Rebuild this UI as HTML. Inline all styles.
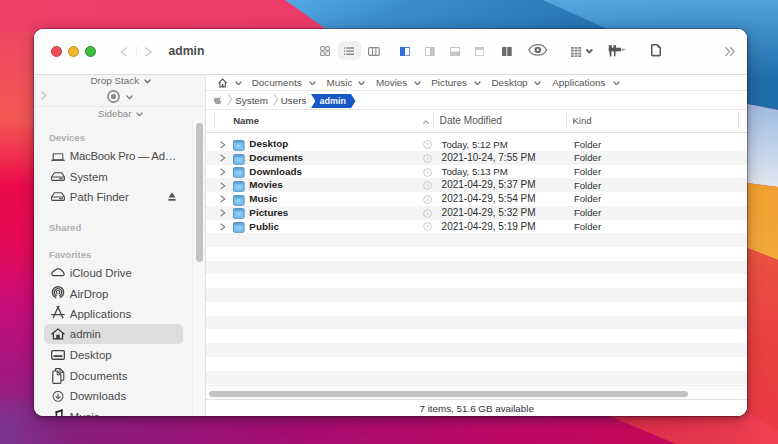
<!DOCTYPE html>
<html><head><meta charset="utf-8">
<style>
html,body{margin:0;padding:0;width:778px;height:444px;overflow:hidden;}
body{position:relative;font-family:"Liberation Sans",sans-serif;}
.a{position:absolute;}
.t{position:absolute;white-space:nowrap;line-height:1;}
#win{position:absolute;left:34px;top:29px;width:713px;height:387px;border-radius:9px;overflow:hidden;background:#fff;}
#winsh{position:absolute;left:34px;top:29px;width:713px;height:387px;border-radius:9px;box-shadow:0 0 0 0.6px rgba(30,10,20,0.45),0 2px 5px rgba(30,0,20,0.3),0 3px 16px rgba(30,0,20,0.3);}
#in{position:absolute;left:-34px;top:-29px;width:778px;height:444px;}
</style></head><body>
<svg class="a" style="left:0;top:0" width="778" height="444" viewBox="0 0 778 444">
<defs>
<linearGradient id="gLeft" gradientUnits="userSpaceOnUse" x1="0" y1="0" x2="0" y2="444">
<stop offset="0" stop-color="#ec4066"/>
<stop offset="0.12" stop-color="#f04c5e"/>
<stop offset="0.27" stop-color="#f25654"/>
<stop offset="0.35" stop-color="#f0304e"/>
<stop offset="0.42" stop-color="#ec0a4c"/>
<stop offset="0.56" stop-color="#e20a58"/>
<stop offset="0.68" stop-color="#c80c78"/>
<stop offset="0.85" stop-color="#a01880"/>
<stop offset="1" stop-color="#7a3490"/>
</linearGradient>
<linearGradient id="gTop" gradientUnits="userSpaceOnUse" x1="0" y1="0" x2="300" y2="0">
<stop offset="0" stop-color="#ec4066"/>
<stop offset="1" stop-color="#ee3a68"/>
</linearGradient>
<linearGradient id="gBot" gradientUnits="userSpaceOnUse" x1="0" y1="0" x2="640" y2="0">
<stop offset="0" stop-color="#7a3490"/>
<stop offset="0.12" stop-color="#8a1e7e"/>
<stop offset="0.45" stop-color="#a40c70"/>
<stop offset="0.78" stop-color="#bc0868"/>
<stop offset="1" stop-color="#c6085a"/>
</linearGradient>
<linearGradient id="gBotMask" gradientUnits="userSpaceOnUse" x1="0" y1="395" x2="0" y2="425">
<stop offset="0" stop-color="#fff" stop-opacity="0"/>
<stop offset="1" stop-color="#fff" stop-opacity="1"/>
</linearGradient>
<mask id="mBot"><rect x="0" y="380" width="778" height="64" fill="url(#gBotMask)"/></mask>
<linearGradient id="gBlue" gradientUnits="userSpaceOnUse" x1="330" y1="-20" x2="420" y2="150">
<stop offset="0" stop-color="#52a8e2"/>
<stop offset="0.3" stop-color="#3c8ccc"/>
<stop offset="1" stop-color="#1f6cab"/>
</linearGradient>
<linearGradient id="gStreak" gradientUnits="userSpaceOnUse" x1="0" y1="0" x2="0" y2="80">
<stop offset="0" stop-color="#62b4ea" stop-opacity="0.75"/>
<stop offset="1" stop-color="#62b4ea" stop-opacity="0"/>
</linearGradient>
<linearGradient id="gLB" gradientUnits="userSpaceOnUse" x1="0" y1="100" x2="0" y2="186">
<stop offset="0" stop-color="#9db6e0"/>
<stop offset="0.5" stop-color="#bccfea"/>
<stop offset="1" stop-color="#dfe6f0"/>
</linearGradient>
<linearGradient id="gOr" gradientUnits="userSpaceOnUse" x1="0" y1="185" x2="0" y2="255">
<stop offset="0" stop-color="#f0a030"/>
<stop offset="1" stop-color="#f2a83a"/>
</linearGradient>
<linearGradient id="gRed" gradientUnits="userSpaceOnUse" x1="0" y1="250" x2="0" y2="444">
<stop offset="0" stop-color="#ea5240"/>
<stop offset="0.5" stop-color="#e84040"/>
<stop offset="1" stop-color="#ec3848"/>
</linearGradient>
<linearGradient id="gRedB" gradientUnits="userSpaceOnUse" x1="600" y1="0" x2="778" y2="0">
<stop offset="0" stop-color="#d82a48"/>
<stop offset="1" stop-color="#f04050"/>
</linearGradient>
</defs>
<rect x="0" y="0" width="778" height="444" fill="url(#gLeft)"/>
<polygon points="0,0 285,0 330,32 0,32" fill="url(#gTop)"/>
<g mask="url(#mBot)"><rect x="0" y="380" width="778" height="64" fill="url(#gBot)"/></g>
<polygon points="285,0 778,0 778,110 747,104 500,60 330,32" fill="url(#gBlue)"/>
<polygon points="543,0 778,0 778,80 720,80" fill="url(#gStreak)"/>
<polygon points="747,104 778,110 778,187 747,183" fill="url(#gLB)"/>
<polygon points="747,183 778,187 778,260 747,248" fill="url(#gOr)"/>
<polygon points="747,248 778,260 778,444 747,444" fill="url(#gRed)"/>
<polygon points="600,412 747,412 778,430 778,444 676,444" fill="url(#gRedB)"/>
</svg>

<div id="winsh"></div>
<div id="win"><div id="in">
<div class="a" style="left:34.00px;top:29.00px;width:713.00px;height:45.00px;background:#fefefe;"></div>
<div class="a" style="left:34.00px;top:73.80px;width:713.00px;height:1.00px;background:#dcdcdc;"></div>
<div class="a" style="left:50.90px;top:45.70px;width:11px;height:11px;box-sizing:border-box;border-radius:50%;background:#f24f55;border:1px solid #b8404a;"></div>
<div class="a" style="left:68.00px;top:45.70px;width:11px;height:11px;box-sizing:border-box;border-radius:50%;background:#f2b62a;border:1px solid #c49028;"></div>
<div class="a" style="left:85.30px;top:45.70px;width:11px;height:11px;box-sizing:border-box;border-radius:50%;background:#38c23e;border:1px solid #2a8a34;"></div>
<svg class="a" style="left:120.00px;top:46.60px" width="7.30" height="9.80"><polyline points="6.30,1 1,4.90 6.30,8.80" fill="none" stroke="#c6c6c6" stroke-width="1.3" stroke-linecap="round" stroke-linejoin="round"/></svg>
<div class="a" style="left:136.20px;top:45.70px;width:0.80px;height:10.30px;background:#efefef;"></div>
<svg class="a" style="left:145.40px;top:46.60px" width="7.20" height="9.80"><polyline points="1,1 6.20,4.90 1,8.80" fill="none" stroke="#c6c6c6" stroke-width="1.3" stroke-linecap="round" stroke-linejoin="round"/></svg>
<div class="t" style="left:168.50px;top:45.07px;font-size:12.2px;color:#4b4b4b;font-weight:bold;">admin</div>
<svg class="a" style="left:319.80px;top:46.20px" width="10" height="10" viewBox="0 0 10 10"><rect x="0.6" y="0.6" width="3.8" height="3.8" rx="1" fill="none" stroke="#9a9a9a" stroke-width="1.1"/><rect x="5.8" y="0.6" width="3.8" height="3.8" rx="1" fill="none" stroke="#9a9a9a" stroke-width="1.1"/><rect x="0.6" y="5.8" width="3.8" height="3.8" rx="1" fill="none" stroke="#9a9a9a" stroke-width="1.1"/><rect x="5.8" y="5.8" width="3.8" height="3.8" rx="1" fill="none" stroke="#9a9a9a" stroke-width="1.1"/></svg>
<div class="a" style="left:337.80px;top:41.30px;width:23.40px;height:18.70px;background:#f0f0f0;border-radius:5px;"></div>
<svg class="a" style="left:344.20px;top:47.00px" width="10" height="9" viewBox="0 0 10 9"><rect x="0" y="0.44999999999999996" width="1.2" height="1.1" fill="#666"/><rect x="2.3" y="0.44999999999999996" width="7.6" height="1.1" fill="#666"/><rect x="0" y="3.55" width="1.2" height="1.1" fill="#666"/><rect x="2.3" y="3.55" width="7.6" height="1.1" fill="#666"/><rect x="0" y="6.65" width="1.2" height="1.1" fill="#666"/><rect x="2.3" y="6.65" width="7.6" height="1.1" fill="#666"/></svg>
<svg class="a" style="left:368.10px;top:46.80px" width="12" height="9.2" viewBox="0 0 12 9.2"><rect x="0.65" y="0.65" width="10.6" height="7.8" rx="1" fill="none" stroke="#8a8a8a" stroke-width="1.2"/><rect x="4" y="0.5" width="1.1" height="8" fill="#8a8a8a"/><rect x="7.3" y="0.5" width="1.1" height="8" fill="#8a8a8a"/></svg>
<svg class="a" style="left:400.10px;top:47.20px" width="10.2" height="9.3" viewBox="0 0 10.2 9.3"><rect x="0.5" y="0.5" width="9.2" height="8.3" fill="#fff" stroke="#4a7ed0" stroke-width="1"/><rect x="0" y="0" width="5" height="9.3" fill="#2f6fd6"/></svg>
<svg class="a" style="left:425.20px;top:47.20px" width="9.6" height="9.3" viewBox="0 0 9.6 9.3"><rect x="0.5" y="0.5" width="8.6" height="8.3" fill="#fff" stroke="#c4c4c4" stroke-width="1"/><rect x="4.8" y="0" width="4.8" height="9.3" fill="#c4c4c4"/></svg>
<svg class="a" style="left:449.60px;top:47.20px" width="10" height="9.3" viewBox="0 0 10 9.3"><rect x="0.5" y="0.5" width="9" height="8.3" fill="#fff" stroke="#c4c4c4" stroke-width="1"/><rect x="0" y="4.6" width="10" height="4.7" fill="#c4c4c4"/></svg>
<svg class="a" style="left:475.00px;top:47.20px" width="9.2" height="9.3" viewBox="0 0 9.2 9.3"><rect x="0.5" y="0.5" width="8.2" height="8.3" fill="#fff" stroke="#c4c4c4" stroke-width="1"/><rect x="0" y="0" width="9.2" height="2.8" fill="#c4c4c4"/></svg>
<svg class="a" style="left:502.30px;top:47.20px" width="9.7" height="9.3" viewBox="0 0 9.7 9.3"><rect x="0" y="0" width="4.4" height="9.3" fill="#6a6a6a"/><rect x="5.3" y="0" width="4.4" height="9.3" fill="#6a6a6a"/></svg>
<svg class="a" style="left:528.00px;top:44.40px" width="20" height="12" viewBox="0 0 20 12"><path d="M0.8,5.95 C3.5,1.2 7,0.7 9.8,0.7 C12.6,0.7 16.1,1.2 18.8,5.95 C16.1,10.7 12.6,11.2 9.8,11.2 C7,11.2 3.5,10.7 0.8,5.95 Z" fill="none" stroke="#777" stroke-width="1.3"/><circle cx="9.8" cy="5.95" r="3.3" fill="#6e6e6e"/><circle cx="9.8" cy="5.95" r="1.1" fill="#fff"/></svg>
<svg class="a" style="left:571.40px;top:46.70px" width="10.4" height="10.2" viewBox="0 0 10.4 10.2"><rect x="0" y="0" width="2.8" height="1.8" fill="#888"/><rect x="3.7" y="0" width="2.8" height="1.8" fill="#888"/><rect x="7.4" y="0" width="2.8" height="1.8" fill="#888"/><rect x="0" y="2.5" width="2.8" height="1.8" fill="#888"/><rect x="3.7" y="2.5" width="2.8" height="1.8" fill="#888"/><rect x="7.4" y="2.5" width="2.8" height="1.8" fill="#888"/><rect x="0" y="5.8" width="2.8" height="1.8" fill="#888"/><rect x="3.7" y="5.8" width="2.8" height="1.8" fill="#888"/><rect x="7.4" y="5.8" width="2.8" height="1.8" fill="#888"/><rect x="0" y="8.3" width="2.8" height="1.8" fill="#888"/><rect x="3.7" y="8.3" width="2.8" height="1.8" fill="#888"/><rect x="7.4" y="8.3" width="2.8" height="1.8" fill="#888"/><rect x="0" y="4.55" width="10.2" height="0.7" fill="#999"/></svg>
<svg class="a" style="left:586.10px;top:49.30px" width="6.6" height="4.6"><polyline points="1,1 3.3,3.6 5.6,1" fill="none" stroke="#666" stroke-width="2" stroke-linecap="round" stroke-linejoin="round"/></svg>
<svg class="a" style="left:608.20px;top:45.10px" width="18" height="12" viewBox="0 0 18 12"><polygon points="0.7,0.3 3.9,0.3 3.3,11.5 1.9,11.5" fill="#555"/><polygon points="5.3,0.3 8,0.3 7.4,11.5 6.2,11.5" fill="#555"/><rect x="0.7" y="2.7" width="12.3" height="3.6" fill="#555"/><polygon points="13.8,3.2 17.9,4.5 13.8,5.9" fill="#999"/></svg>
<svg class="a" style="left:650.90px;top:44.40px" width="10" height="12.4" viewBox="0 0 10 12.4"><path d="M1.8,0.7 H6.2 L9.3,3.8 V10.6 Q9.3,11.6 8.3,11.6 H1.8 Q0.7,11.6 0.7,10.6 V1.8 Q0.7,0.7 1.8,0.7 Z" fill="none" stroke="#555" stroke-width="1.6" stroke-linejoin="round"/><polygon points="6.2,0.7 9.3,3.8 6.6,3.6" fill="#555"/></svg>
<svg class="a" style="left:725.30px;top:47.40px" width="10.4" height="9.4" viewBox="0 0 10.4 9.4"><polyline points="0.8,0.8 4.6,4.6 0.8,8.4" fill="none" stroke="#9a9a9a" stroke-width="1.3" stroke-linecap="round" stroke-linejoin="round"/><polyline points="5.6,0.8 9.4,4.6 5.6,8.4" fill="none" stroke="#9a9a9a" stroke-width="1.3" stroke-linecap="round" stroke-linejoin="round"/></svg>
<div class="a" style="left:34.00px;top:74.80px;width:171.00px;height:341.20px;background:#f5f5f5;"></div>
<div class="a" style="left:204.80px;top:74.80px;width:0.80px;height:341.20px;background:#e2e2e2;"></div>
<div class="t" style="left:90.40px;top:75.92px;font-size:9.9px;color:#6e6e6e;font-weight:normal;">Drop Stack</div>
<svg class="a" style="left:143.50px;top:79.00px" width="7" height="4.8"><polyline points="1,1 3.5,3.8 6,1" fill="none" stroke="#6e6e6e" stroke-width="1.3" stroke-linecap="round" stroke-linejoin="round"/></svg>
<svg class="a" style="left:41.20px;top:91.20px" width="5.60" height="9.00"><polyline points="1,1 4.60,4.50 1,8.00" fill="none" stroke="#bdbdbd" stroke-width="1.1" stroke-linecap="round" stroke-linejoin="round"/></svg>
<svg class="a" style="left:106.60px;top:90.40px" width="13" height="13" viewBox="0 0 13 13"><circle cx="6.5" cy="6.5" r="5.6" fill="none" stroke="#8c8c8c" stroke-width="1.6"/><circle cx="6.5" cy="6.5" r="2.6" fill="#8c8c8c"/></svg>
<svg class="a" style="left:125.50px;top:95.20px" width="7" height="4.8"><polyline points="1,1 3.5,3.8 6,1" fill="none" stroke="#7a7a7a" stroke-width="1.3" stroke-linecap="round" stroke-linejoin="round"/></svg>
<div class="a" style="left:34.00px;top:106.40px;width:170.60px;height:0.80px;background:#ebebeb;"></div>
<div class="t" style="left:98.00px;top:109.49px;font-size:9.7px;color:#8a8a8a;font-weight:normal;">Sidebar</div>
<svg class="a" style="left:135.50px;top:112.00px" width="7" height="4.8"><polyline points="1,1 3.5,3.8 6,1" fill="none" stroke="#8a8a8a" stroke-width="1.3" stroke-linecap="round" stroke-linejoin="round"/></svg>
<div class="a" style="left:193.00px;top:119.00px;width:11.60px;height:297.00px;background:#f7f7f7;"></div>
<div class="a" style="left:192.40px;top:119.00px;width:0.60px;height:297.00px;background:#eeeeee;"></div>
<div class="a" style="left:196.10px;top:122.80px;width:6.80px;height:139.70px;background:#c2c2c2;border-radius:3.4px;"></div>
<div class="t" style="left:49.00px;top:133.46px;font-size:9.5px;color:#b0b0b0;font-weight:bold;">Devices</div>
<div class="t" style="left:49.00px;top:222.86px;font-size:9.5px;color:#b0b0b0;font-weight:bold;">Shared</div>
<div class="t" style="left:49.00px;top:249.86px;font-size:9.5px;color:#b0b0b0;font-weight:bold;">Favorites</div>
<div class="a" style="left:43.80px;top:324.20px;width:139.60px;height:19.80px;background:#dddddd;border-radius:5px;"></div>
<div class="t" style="left:69.80px;top:151.25px;font-size:11.4px;color:#4a4a4a;font-weight:normal;letter-spacing:-0.28px;">MacBook Pro — Ad…</div>
<div class="t" style="left:69.80px;top:172.05px;font-size:11.4px;color:#4a4a4a;font-weight:normal;">System</div>
<div class="t" style="left:69.80px;top:191.95px;font-size:11.4px;color:#4a4a4a;font-weight:normal;">Path Finder</div>
<div class="t" style="left:69.80px;top:267.55px;font-size:11.4px;color:#4a4a4a;font-weight:normal;">iCloud Drive</div>
<div class="t" style="left:69.80px;top:288.65px;font-size:11.4px;color:#4a4a4a;font-weight:normal;">AirDrop</div>
<div class="t" style="left:69.80px;top:308.75px;font-size:11.4px;color:#4a4a4a;font-weight:normal;">Applications</div>
<div class="t" style="left:69.80px;top:328.95px;font-size:11.4px;color:#4a4a4a;font-weight:normal;">admin</div>
<div class="t" style="left:69.80px;top:349.85px;font-size:11.4px;color:#4a4a4a;font-weight:normal;">Desktop</div>
<div class="t" style="left:69.80px;top:370.55px;font-size:11.4px;color:#4a4a4a;font-weight:normal;">Documents</div>
<div class="t" style="left:69.80px;top:391.35px;font-size:11.4px;color:#4a4a4a;font-weight:normal;">Downloads</div>
<div class="t" style="left:69.80px;top:412.15px;font-size:11.4px;color:#4a4a4a;font-weight:normal;">Music</div>
<svg class="a" style="left:51.00px;top:152.50px" width="14" height="9" viewBox="0 0 14 9"><rect x="2.2" y="0.8" width="9.6" height="6" rx="0.6" fill="none" stroke="#555" stroke-width="1.1"/><rect x="0.3" y="6.6" width="13.4" height="1.3" rx="0.5" fill="#555"/></svg>
<svg class="a" style="left:51.00px;top:172.40px" width="14" height="9" viewBox="0 0 14 9"><path d="M3.4,0.7 H10.6 L13.4,5 V7.6 Q13.4,8.4 12.6,8.4 H1.4 Q0.6,8.4 0.6,7.6 V5 Z" fill="none" stroke="#4a4a4a" stroke-width="1.15" stroke-linejoin="round"/><line x1="0.8" y1="5" x2="13.2" y2="5" stroke="#4a4a4a" stroke-width="1"/><line x1="8" y1="6.7" x2="12" y2="6.7" stroke="#4a4a4a" stroke-width="1"/></svg>
<svg class="a" style="left:51.00px;top:192.30px" width="14" height="9" viewBox="0 0 14 9"><path d="M3.4,0.7 H10.6 L13.4,5 V7.6 Q13.4,8.4 12.6,8.4 H1.4 Q0.6,8.4 0.6,7.6 V5 Z" fill="none" stroke="#4a4a4a" stroke-width="1.15" stroke-linejoin="round"/><line x1="0.8" y1="5" x2="13.2" y2="5" stroke="#4a4a4a" stroke-width="1"/><line x1="8" y1="6.7" x2="12" y2="6.7" stroke="#4a4a4a" stroke-width="1"/></svg>
<svg class="a" style="left:168.00px;top:192.20px" width="8" height="9" viewBox="0 0 8 9"><polygon points="4,0.3 7.6,5.5 0.4,5.5" fill="#555"/><rect x="0.4" y="6.9" width="7.2" height="1.8" fill="#555"/></svg>
<svg class="a" style="left:50.60px;top:267.60px" width="14" height="9" viewBox="0 0 14 9"><path d="M2.4,7.6 H11.6 Q13.4,7.6 13.1,6 Q12.6,4 10.4,2 Q8.6,0.8 6.8,0.9 Q4.8,1 3.4,2.6 Q1,3.8 0.8,5.6 Q0.8,7.6 2.4,7.6 Z" fill="none" stroke="#444" stroke-width="1.2" stroke-linejoin="round"/></svg>
<svg class="a" style="left:51.40px;top:286.00px" width="14" height="13" viewBox="0 0 14 13"><circle cx="7" cy="6.3" r="5.6" fill="none" stroke="#4a4a4a" stroke-width="1.4"/><circle cx="7" cy="6.3" r="3.7" fill="none" stroke="#4a4a4a" stroke-width="1.3"/><circle cx="7" cy="6.3" r="1.8" fill="none" stroke="#4a4a4a" stroke-width="1.2"/><polygon points="7,6.8 4.6,13 9.4,13" fill="#f5f5f5"/></svg>
<svg class="a" style="left:51.00px;top:306.00px" width="14" height="13" viewBox="0 0 14 13"><line x1="7" y1="1.2" x2="2.2" y2="11.8" stroke="#444" stroke-width="1.3" stroke-linecap="round"/><line x1="7" y1="1.2" x2="11.8" y2="11.8" stroke="#444" stroke-width="1.3" stroke-linecap="round"/><line x1="0.8" y1="8.6" x2="13.2" y2="8.6" stroke="#444" stroke-width="1.3" stroke-linecap="round"/><line x1="5.6" y1="0.6" x2="8.4" y2="0.6" stroke="#444" stroke-width="1"/></svg>
<svg class="a" style="left:51.40px;top:328.30px" width="14" height="12" viewBox="0 0 14 12"><path d="M0.9,6 L7,0.9 L13.1,6" fill="none" stroke="#333" stroke-width="1.2" stroke-linejoin="round" stroke-linecap="round"/><path d="M2.4,4.8 V10.8 H11.6 V4.8" fill="none" stroke="#333" stroke-width="1.2"/><rect x="5.3" y="6.8" width="3.4" height="4" fill="#333"/></svg>
<svg class="a" style="left:51.00px;top:350.20px" width="14" height="10" viewBox="0 0 14 10"><rect x="0.65" y="0.65" width="12.7" height="8.6" rx="1.2" fill="none" stroke="#444" stroke-width="1.3"/><rect x="2.6" y="5.2" width="8.8" height="1.8" fill="#444"/></svg>
<svg class="a" style="left:52.00px;top:367.50px" width="13" height="16" viewBox="0 0 13 16"><path d="M4.3,0.6 H8 L11.8,4.4 V11.4 Q11.8,12.2 11,12.2 H4.3 Q3.5,12.2 3.5,11.4 V1.4 Q3.5,0.6 4.3,0.6 Z" fill="#f5f5f5" stroke="#444" stroke-width="1.15"/><path d="M8,0.6 V4.4 H11.8" fill="none" stroke="#444" stroke-width="1"/><path d="M1.6,3 H5.2 L8.9,6.8 V14.6 Q8.9,15.4 8.1,15.4 H1.6 Q0.8,15.4 0.8,14.6 V3.8 Q0.8,3 1.6,3 Z" fill="#f5f5f5" stroke="#444" stroke-width="1.15"/><path d="M5.2,3 V6.8 H8.9" fill="none" stroke="#444" stroke-width="1"/></svg>
<svg class="a" style="left:51.00px;top:391.20px" width="14" height="11" viewBox="0 0 14 11"><circle cx="7" cy="5.3" r="4.9" fill="none" stroke="#555" stroke-width="1.1"/><line x1="7" y1="2.4" x2="7" y2="7.6" stroke="#555" stroke-width="1.1"/><polyline points="4.7,5.4 7,7.7 9.3,5.4" fill="none" stroke="#555" stroke-width="1.1"/></svg>
<svg class="a" style="left:55.00px;top:409.00px" width="9" height="8" viewBox="0 0 9 8"><polygon points="0.6,2.2 7.6,0.2 7.6,2.3 0.6,4.3" fill="#222"/><rect x="0.6" y="2.2" width="1.5" height="6" fill="#222"/><rect x="6.1" y="0.6" width="1.5" height="7.4" fill="#222"/></svg>
<div class="a" style="left:205.60px;top:74.80px;width:541.40px;height:341.20px;background:#ffffff;"></div>
<div class="a" style="left:205.60px;top:90.40px;width:541.40px;height:0.80px;background:#e6e6e6;"></div>
<div class="a" style="left:205.60px;top:108.80px;width:541.40px;height:0.80px;background:#e6e6e6;"></div>
<div class="a" style="left:205.60px;top:132.00px;width:541.40px;height:0.90px;background:#e2e2e2;"></div>
<svg class="a" style="left:217.60px;top:78.00px" width="10" height="10" viewBox="0 0 10 10"><path d="M0.8,4.9 L4.6,1 L8.4,4.9" fill="none" stroke="#555" stroke-width="1.1" stroke-linejoin="round" stroke-linecap="round"/><path d="M1.9,4.1 V8.9 H7.3 V4.1" fill="none" stroke="#555" stroke-width="1.1"/><rect x="3.8" y="6" width="1.6" height="2.9" fill="#555"/></svg>
<svg class="a" style="left:234.50px;top:80.60px" width="7" height="4.8"><polyline points="1,1 3.5,3.8 6,1" fill="none" stroke="#666" stroke-width="1.2" stroke-linecap="round" stroke-linejoin="round"/></svg>
<div class="t" style="left:251.70px;top:78.22px;font-size:9.9px;color:#555;font-weight:normal;">Documents</div>
<svg class="a" style="left:308.70px;top:80.60px" width="7" height="4.8"><polyline points="1,1 3.5,3.8 6,1" fill="none" stroke="#666" stroke-width="1.2" stroke-linecap="round" stroke-linejoin="round"/></svg>
<div class="t" style="left:326.60px;top:78.22px;font-size:9.9px;color:#555;font-weight:normal;">Music</div>
<svg class="a" style="left:358.10px;top:80.60px" width="7" height="4.8"><polyline points="1,1 3.5,3.8 6,1" fill="none" stroke="#666" stroke-width="1.2" stroke-linecap="round" stroke-linejoin="round"/></svg>
<div class="t" style="left:376.00px;top:78.22px;font-size:9.9px;color:#555;font-weight:normal;">Movies</div>
<svg class="a" style="left:413.80px;top:80.60px" width="7" height="4.8"><polyline points="1,1 3.5,3.8 6,1" fill="none" stroke="#666" stroke-width="1.2" stroke-linecap="round" stroke-linejoin="round"/></svg>
<div class="t" style="left:431.20px;top:78.22px;font-size:9.9px;color:#555;font-weight:normal;">Pictures</div>
<svg class="a" style="left:473.50px;top:80.60px" width="7" height="4.8"><polyline points="1,1 3.5,3.8 6,1" fill="none" stroke="#666" stroke-width="1.2" stroke-linecap="round" stroke-linejoin="round"/></svg>
<div class="t" style="left:491.40px;top:78.22px;font-size:9.9px;color:#555;font-weight:normal;">Desktop</div>
<svg class="a" style="left:533.60px;top:80.60px" width="7" height="4.8"><polyline points="1,1 3.5,3.8 6,1" fill="none" stroke="#666" stroke-width="1.2" stroke-linecap="round" stroke-linejoin="round"/></svg>
<div class="t" style="left:552.20px;top:78.22px;font-size:9.9px;color:#555;font-weight:normal;">Applications</div>
<svg class="a" style="left:613.00px;top:80.60px" width="7" height="4.8"><polyline points="1,1 3.5,3.8 6,1" fill="none" stroke="#666" stroke-width="1.2" stroke-linecap="round" stroke-linejoin="round"/></svg>
<svg class="a" style="left:212.60px;top:95.00px" width="9" height="10" viewBox="0 0 9 10"><path d="M6.6,2.4 Q7,1 8.1,0.4 Q8.1,1.7 6.6,2.4 Z M4.4,3 Q5.3,3 5.9,2.7 Q6.9,2.3 7.8,3 Q6.7,3.9 7.1,5.3 Q7.4,6.3 8.4,6.8 Q7.7,9 6.6,9.3 Q6,9.4 5.4,9 Q4.6,8.6 3.8,9.1 Q3,9.4 2.5,8.8 Q0.2,6 0.9,4 Q1.7,2.7 3,2.8 Q3.7,2.9 4.4,3 Z" fill="#a0a0a0"/></svg>
<svg class="a" style="left:227.20px;top:93.40px" width="5.60" height="12.80"><polyline points="1,1 4.60,6.40 1,11.80" fill="none" stroke="#c4c4c4" stroke-width="1.1" stroke-linecap="round" stroke-linejoin="round"/></svg>
<div class="t" style="left:235.30px;top:95.80px;font-size:9.8px;color:#444;font-weight:normal;">System</div>
<svg class="a" style="left:272.80px;top:93.40px" width="5.60" height="12.80"><polyline points="1,1 4.60,6.40 1,11.80" fill="none" stroke="#c4c4c4" stroke-width="1.1" stroke-linecap="round" stroke-linejoin="round"/></svg>
<div class="t" style="left:280.80px;top:95.80px;font-size:9.8px;color:#444;font-weight:normal;">Users</div>
<svg class="a" style="left:310.50px;top:93.70px" width="45" height="14.2" viewBox="0 0 45 14.2"><polygon points="0,0 40,0 44.6,7.1 40,14.2 0,14.2 4.4,7.1" fill="#1857c6"/></svg>
<div class="t" style="left:319.40px;top:96.58px;font-size:9.0px;color:#f2f6ff;font-weight:bold;">admin</div>
<div class="a" style="left:214.40px;top:111.00px;width:0.80px;height:16.50px;background:#e4e4e4;"></div>
<div class="a" style="left:433.40px;top:111.00px;width:0.80px;height:16.50px;background:#e4e4e4;"></div>
<div class="a" style="left:565.90px;top:111.00px;width:0.80px;height:16.50px;background:#e4e4e4;"></div>
<div class="a" style="left:737.80px;top:111.00px;width:0.80px;height:16.50px;background:#e4e4e4;"></div>
<div class="t" style="left:233.20px;top:116.06px;font-size:9.5px;color:#3e3e3e;font-weight:bold;">Name</div>
<svg class="a" style="left:422.80px;top:119.60px" width="6" height="4" viewBox="0 0 6 4"><polyline points="0.7,3.3 3,0.9 5.3,3.3" fill="none" stroke="#999" stroke-width="1.1" stroke-linecap="round" stroke-linejoin="round"/></svg>
<div class="t" style="left:439.60px;top:115.55px;font-size:10.1px;color:#555;font-weight:normal;">Date Modified</div>
<div class="t" style="left:572.40px;top:115.97px;font-size:9.6px;color:#555;font-weight:normal;">Kind</div>
<div class="a" style="left:205.60px;top:151.02px;width:541.40px;height:13.72px;background:#f4f4f4;"></div>
<div class="a" style="left:205.60px;top:178.46px;width:541.40px;height:13.72px;background:#f4f4f4;"></div>
<div class="a" style="left:205.60px;top:205.90px;width:541.40px;height:13.72px;background:#f4f4f4;"></div>
<div class="a" style="left:205.60px;top:233.34px;width:541.40px;height:13.72px;background:#f4f4f4;"></div>
<div class="a" style="left:205.60px;top:260.78px;width:541.40px;height:13.72px;background:#f4f4f4;"></div>
<div class="a" style="left:205.60px;top:288.22px;width:541.40px;height:13.72px;background:#f4f4f4;"></div>
<div class="a" style="left:205.60px;top:315.66px;width:541.40px;height:13.72px;background:#f4f4f4;"></div>
<div class="a" style="left:205.60px;top:343.10px;width:541.40px;height:13.72px;background:#f4f4f4;"></div>
<div class="a" style="left:205.60px;top:370.54px;width:541.40px;height:13.46px;background:#f4f4f4;"></div>
<svg class="a" style="left:220.00px;top:140.50px" width="5.80" height="7.80"><polyline points="1,1 4.80,3.90 1,6.80" fill="none" stroke="#7a7a7a" stroke-width="1.1" stroke-linecap="round" stroke-linejoin="round"/></svg>
<svg class="a" style="left:233.00px;top:139.80px" width="11.6" height="11" viewBox="0 0 11.6 11"><rect x="0.5" y="0.5" width="10.6" height="9.8" rx="1.3" fill="#76bfee" stroke="#5b97c6" stroke-width="1"/><rect x="1" y="1" width="9.6" height="1.6" fill="#5a9ed2"/><rect x="3.2" y="4.2" width="5.2" height="3.6" rx="0.6" fill="#8fd0f7"/></svg>
<div class="t" style="left:249.30px;top:139.32px;font-size:9.9px;color:#222;font-weight:bold;">Desktop</div>
<svg class="a" style="left:422.90px;top:140.10px" width="9" height="9" viewBox="0 0 9 9"><circle cx="4.5" cy="4.5" r="3.9" fill="none" stroke="#c4c4c4" stroke-width="0.9"/><polyline points="3.8,2.8 5.5,4.5 3.8,6.2" fill="none" stroke="#c4c4c4" stroke-width="0.9"/></svg>
<div class="t" style="left:441.60px;top:139.53px;font-size:9.65px;color:#2e2e2e;font-weight:normal;">Today, 5:12 PM</div>
<div class="t" style="left:573.90px;top:139.57px;font-size:9.6px;color:#333;font-weight:normal;">Folder</div>
<svg class="a" style="left:220.00px;top:154.22px" width="5.80" height="7.80"><polyline points="1,1 4.80,3.90 1,6.80" fill="none" stroke="#7a7a7a" stroke-width="1.1" stroke-linecap="round" stroke-linejoin="round"/></svg>
<svg class="a" style="left:233.00px;top:153.52px" width="11.6" height="11" viewBox="0 0 11.6 11"><rect x="0.5" y="0.5" width="10.6" height="9.8" rx="1.3" fill="#76bfee" stroke="#5b97c6" stroke-width="1"/><rect x="1" y="1" width="9.6" height="1.6" fill="#5a9ed2"/><rect x="3.2" y="4.2" width="5.2" height="3.6" rx="0.6" fill="#8fd0f7"/></svg>
<div class="t" style="left:249.30px;top:153.04px;font-size:9.9px;color:#222;font-weight:bold;">Documents</div>
<svg class="a" style="left:422.90px;top:153.82px" width="9" height="9" viewBox="0 0 9 9"><circle cx="4.5" cy="4.5" r="3.9" fill="none" stroke="#c4c4c4" stroke-width="0.9"/><polyline points="3.8,2.8 5.5,4.5 3.8,6.2" fill="none" stroke="#c4c4c4" stroke-width="0.9"/></svg>
<div class="t" style="left:441.60px;top:152.95px;font-size:10.0px;color:#2e2e2e;font-weight:normal;">2021-10-24, 7:55 PM</div>
<div class="t" style="left:573.90px;top:153.29px;font-size:9.6px;color:#333;font-weight:normal;">Folder</div>
<svg class="a" style="left:220.00px;top:167.94px" width="5.80" height="7.80"><polyline points="1,1 4.80,3.90 1,6.80" fill="none" stroke="#7a7a7a" stroke-width="1.1" stroke-linecap="round" stroke-linejoin="round"/></svg>
<svg class="a" style="left:233.00px;top:167.24px" width="11.6" height="11" viewBox="0 0 11.6 11"><rect x="0.5" y="0.5" width="10.6" height="9.8" rx="1.3" fill="#76bfee" stroke="#5b97c6" stroke-width="1"/><rect x="1" y="1" width="9.6" height="1.6" fill="#5a9ed2"/><rect x="3.2" y="4.2" width="5.2" height="3.6" rx="0.6" fill="#8fd0f7"/></svg>
<div class="t" style="left:249.30px;top:166.76px;font-size:9.9px;color:#222;font-weight:bold;">Downloads</div>
<svg class="a" style="left:422.90px;top:167.54px" width="9" height="9" viewBox="0 0 9 9"><circle cx="4.5" cy="4.5" r="3.9" fill="none" stroke="#c4c4c4" stroke-width="0.9"/><polyline points="3.8,2.8 5.5,4.5 3.8,6.2" fill="none" stroke="#c4c4c4" stroke-width="0.9"/></svg>
<div class="t" style="left:441.60px;top:166.97px;font-size:9.65px;color:#2e2e2e;font-weight:normal;">Today, 5:13 PM</div>
<div class="t" style="left:573.90px;top:167.01px;font-size:9.6px;color:#333;font-weight:normal;">Folder</div>
<svg class="a" style="left:220.00px;top:181.66px" width="5.80" height="7.80"><polyline points="1,1 4.80,3.90 1,6.80" fill="none" stroke="#7a7a7a" stroke-width="1.1" stroke-linecap="round" stroke-linejoin="round"/></svg>
<svg class="a" style="left:233.00px;top:180.96px" width="11.6" height="11" viewBox="0 0 11.6 11"><rect x="0.5" y="0.5" width="10.6" height="9.8" rx="1.3" fill="#76bfee" stroke="#5b97c6" stroke-width="1"/><rect x="1" y="1" width="9.6" height="1.6" fill="#5a9ed2"/><rect x="3.2" y="4.2" width="5.2" height="3.6" rx="0.6" fill="#8fd0f7"/></svg>
<div class="t" style="left:249.30px;top:180.48px;font-size:9.9px;color:#222;font-weight:bold;">Movies</div>
<svg class="a" style="left:422.90px;top:181.26px" width="9" height="9" viewBox="0 0 9 9"><circle cx="4.5" cy="4.5" r="3.9" fill="none" stroke="#c4c4c4" stroke-width="0.9"/><polyline points="3.8,2.8 5.5,4.5 3.8,6.2" fill="none" stroke="#c4c4c4" stroke-width="0.9"/></svg>
<div class="t" style="left:441.60px;top:180.39px;font-size:10.0px;color:#2e2e2e;font-weight:normal;">2021-04-29, 5:37 PM</div>
<div class="t" style="left:573.90px;top:180.73px;font-size:9.6px;color:#333;font-weight:normal;">Folder</div>
<svg class="a" style="left:220.00px;top:195.38px" width="5.80" height="7.80"><polyline points="1,1 4.80,3.90 1,6.80" fill="none" stroke="#7a7a7a" stroke-width="1.1" stroke-linecap="round" stroke-linejoin="round"/></svg>
<svg class="a" style="left:233.00px;top:194.68px" width="11.6" height="11" viewBox="0 0 11.6 11"><rect x="0.5" y="0.5" width="10.6" height="9.8" rx="1.3" fill="#76bfee" stroke="#5b97c6" stroke-width="1"/><rect x="1" y="1" width="9.6" height="1.6" fill="#5a9ed2"/><rect x="3.2" y="4.2" width="5.2" height="3.6" rx="0.6" fill="#8fd0f7"/></svg>
<div class="t" style="left:249.30px;top:194.20px;font-size:9.9px;color:#222;font-weight:bold;">Music</div>
<svg class="a" style="left:422.90px;top:194.98px" width="9" height="9" viewBox="0 0 9 9"><circle cx="4.5" cy="4.5" r="3.9" fill="none" stroke="#c4c4c4" stroke-width="0.9"/><polyline points="3.8,2.8 5.5,4.5 3.8,6.2" fill="none" stroke="#c4c4c4" stroke-width="0.9"/></svg>
<div class="t" style="left:441.60px;top:194.11px;font-size:10.0px;color:#2e2e2e;font-weight:normal;">2021-04-29, 5:54 PM</div>
<div class="t" style="left:573.90px;top:194.45px;font-size:9.6px;color:#333;font-weight:normal;">Folder</div>
<svg class="a" style="left:220.00px;top:209.10px" width="5.80" height="7.80"><polyline points="1,1 4.80,3.90 1,6.80" fill="none" stroke="#7a7a7a" stroke-width="1.1" stroke-linecap="round" stroke-linejoin="round"/></svg>
<svg class="a" style="left:233.00px;top:208.40px" width="11.6" height="11" viewBox="0 0 11.6 11"><rect x="0.5" y="0.5" width="10.6" height="9.8" rx="1.3" fill="#76bfee" stroke="#5b97c6" stroke-width="1"/><rect x="1" y="1" width="9.6" height="1.6" fill="#5a9ed2"/><rect x="3.2" y="4.2" width="5.2" height="3.6" rx="0.6" fill="#8fd0f7"/></svg>
<div class="t" style="left:249.30px;top:207.92px;font-size:9.9px;color:#222;font-weight:bold;">Pictures</div>
<svg class="a" style="left:422.90px;top:208.70px" width="9" height="9" viewBox="0 0 9 9"><circle cx="4.5" cy="4.5" r="3.9" fill="none" stroke="#c4c4c4" stroke-width="0.9"/><polyline points="3.8,2.8 5.5,4.5 3.8,6.2" fill="none" stroke="#c4c4c4" stroke-width="0.9"/></svg>
<div class="t" style="left:441.60px;top:207.84px;font-size:10.0px;color:#2e2e2e;font-weight:normal;">2021-04-29, 5:32 PM</div>
<div class="t" style="left:573.90px;top:208.17px;font-size:9.6px;color:#333;font-weight:normal;">Folder</div>
<svg class="a" style="left:220.00px;top:222.82px" width="5.80" height="7.80"><polyline points="1,1 4.80,3.90 1,6.80" fill="none" stroke="#7a7a7a" stroke-width="1.1" stroke-linecap="round" stroke-linejoin="round"/></svg>
<svg class="a" style="left:233.00px;top:222.12px" width="11.6" height="11" viewBox="0 0 11.6 11"><rect x="0.5" y="0.5" width="10.6" height="9.8" rx="1.3" fill="#76bfee" stroke="#5b97c6" stroke-width="1"/><rect x="1" y="1" width="9.6" height="1.6" fill="#5a9ed2"/><rect x="3.2" y="4.2" width="5.2" height="3.6" rx="0.6" fill="#8fd0f7"/></svg>
<div class="t" style="left:249.30px;top:221.64px;font-size:9.9px;color:#222;font-weight:bold;">Public</div>
<svg class="a" style="left:422.90px;top:222.42px" width="9" height="9" viewBox="0 0 9 9"><circle cx="4.5" cy="4.5" r="3.9" fill="none" stroke="#c4c4c4" stroke-width="0.9"/><polyline points="3.8,2.8 5.5,4.5 3.8,6.2" fill="none" stroke="#c4c4c4" stroke-width="0.9"/></svg>
<div class="t" style="left:441.60px;top:221.55px;font-size:10.0px;color:#2e2e2e;font-weight:normal;">2021-04-29, 5:19 PM</div>
<div class="t" style="left:573.90px;top:221.89px;font-size:9.6px;color:#333;font-weight:normal;">Folder</div>
<div class="a" style="left:205.60px;top:384.00px;width:541.40px;height:15.60px;background:#fbfbfb;"></div>
<div class="a" style="left:205.60px;top:384.60px;width:541.40px;height:0.70px;background:#efefef;"></div>
<div class="a" style="left:205.60px;top:398.90px;width:541.40px;height:0.80px;background:#e2e2e2;"></div>
<div class="a" style="left:208.90px;top:390.90px;width:478.70px;height:6.60px;background:#c3c3c3;border-radius:3.3px;"></div>
<div class="t" style="left:419.50px;top:403.90px;font-size:9.8px;color:#333;font-weight:normal;">7 items, 51.6 GB available</div>

</div></div>
</body></html>
